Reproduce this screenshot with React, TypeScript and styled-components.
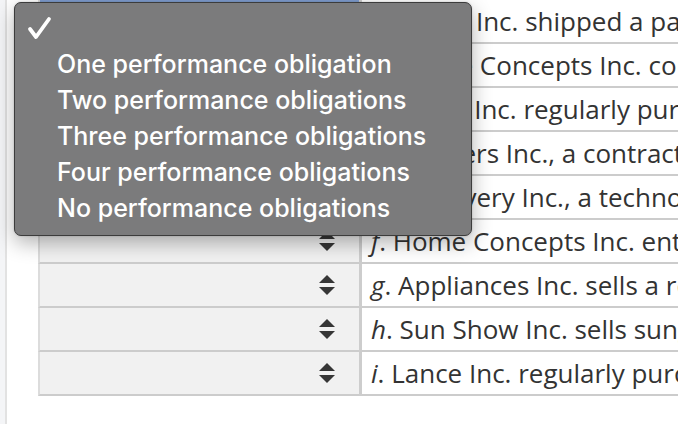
import React from "react";
import styled, { createGlobalStyle } from "styled-components";

const GlobalStyle = createGlobalStyle`
  html, body { margin: 0; padding: 0; background: #ffffff; overflow: hidden; }
  #root { width: 678px; height: 424px; }
`;

const Page = styled.div`
  position: relative;
  display: flex;
  width: 678px;
  height: 424px;
  overflow: hidden;
  background: #ffffff;
`;

const Gutter = styled.div`
  width: 5px;
  flex: none;
  background: #f4f5f7;
  border-right: 2px solid #e2e2e2;
`;

const Main = styled.div`
  flex: 1;
  min-width: 0;
  padding-left: 31px;
`;

const Table = styled.div`
  display: grid;
  grid-template-columns: 324px 1fr;
  width: 720px;
`;

const SelectCell = styled.div<{ $focused?: boolean }>`
  height: 42px;
  display: flex;
  align-items: center;
  justify-content: flex-end;
  padding-right: 24px;
  background: #f1f1f1;
  border-left: 2px solid #dcdcdc;
  border-right: 3px solid #cdcdcd;
  border-bottom: 2px solid #cccccc;
  box-shadow: ${(p) => (p.$focused ? "inset 0 2px 0 #7f9dcf" : "none")};
`;

const TextCell = styled.div`
  height: 42px;
  display: flex;
  align-items: center;
  padding-left: 9px;
  border-bottom: 2px solid #cccccc;
  font-family: "Open Sans", "DejaVu Sans", sans-serif;
  font-size: 26px;
  color: #333333;
  white-space: nowrap;
  overflow: hidden;
  em { font-style: italic; }
`;

const Popup = styled.div`
  position: absolute;
  left: 14px;
  top: 2px;
  width: 456px;
  height: 225px;
  box-sizing: content-box;
  border: 1px solid #3c3c3c;
  border-radius: 7px;
  background: #7b7b7c;
  box-shadow: 0 7px 20px rgba(0, 0, 0, 0.3), 0 0 2px rgba(0, 0, 0, 0.2);
  display: flex;
  flex-direction: column;
  padding-top: 7px;
  font-family: "Inter", "Liberation Sans", sans-serif;
  font-size: 25px;
  font-weight: 500;
  color: #ffffff;
`;

const Item = styled.div`
  position: relative;
  height: 36px;
  display: flex;
  align-items: center;
  padding-left: 42px;
  white-space: nowrap;
`;

const Check = styled.svg`
  position: absolute;
  left: 10px;
  top: 5px;
`;

const Arrows = () => (
  <svg width="16" height="21" viewBox="0 0 16 21">
    <polygon points="8,0 16,8 0,8" fill="#363636" />
    <polygon points="0,12 16,12 8,20" fill="#363636" />
  </svg>
);

const rows: { letter: string; text: string }[] = [
  { letter: "a", text: "Focus Inc. shipped a package of goods to a customer" },
  { letter: "b", text: "Home Concepts Inc. contracted with a customer" },
  { letter: "c", text: "Lance Inc. regularly purchases goods" },
  { letter: "d", text: "Builders Inc., a contractor, agreed to build" },
  { letter: "e", text: "Discovery Inc., a technology company" },
  { letter: "f", text: "Home Concepts Inc. entered into a contract" },
  { letter: "g", text: "Appliances Inc. sells a refrigerator" },
  { letter: "h", text: "Sun Show Inc. sells sunglasses" },
  { letter: "i", text: "Lance Inc. regularly purchases supplies" },
];

const options = [
  "One performance obligation",
  "Two performance obligations",
  "Three performance obligations",
  "Four performance obligations",
  "No performance obligations",
];

export default function App() {
  return (
    <>
      <GlobalStyle />
      <Page>
        <Gutter />
        <Main>
          <Table>
            {rows.map((r, i) => (
              <React.Fragment key={r.letter}>
                <SelectCell $focused={i === 0}>
                  <Arrows />
                </SelectCell>
                <TextCell>
                  <em>{r.letter}</em>.&nbsp;{r.text}
                </TextCell>
              </React.Fragment>
            ))}
          </Table>
        </Main>
        <Popup>
          <Item>
            <Check width="28" height="26" viewBox="0 0 28 26">
              <polyline
                points="5,14 11,22 24,4"
                fill="none"
                stroke="#ffffff"
                strokeWidth="3.8"
                strokeLinecap="round"
                strokeLinejoin="round"
              />
            </Check>
          </Item>
          {options.map((o) => (
            <Item key={o}>{o}</Item>
          ))}
        </Popup>
      </Page>
    </>
  );
}
